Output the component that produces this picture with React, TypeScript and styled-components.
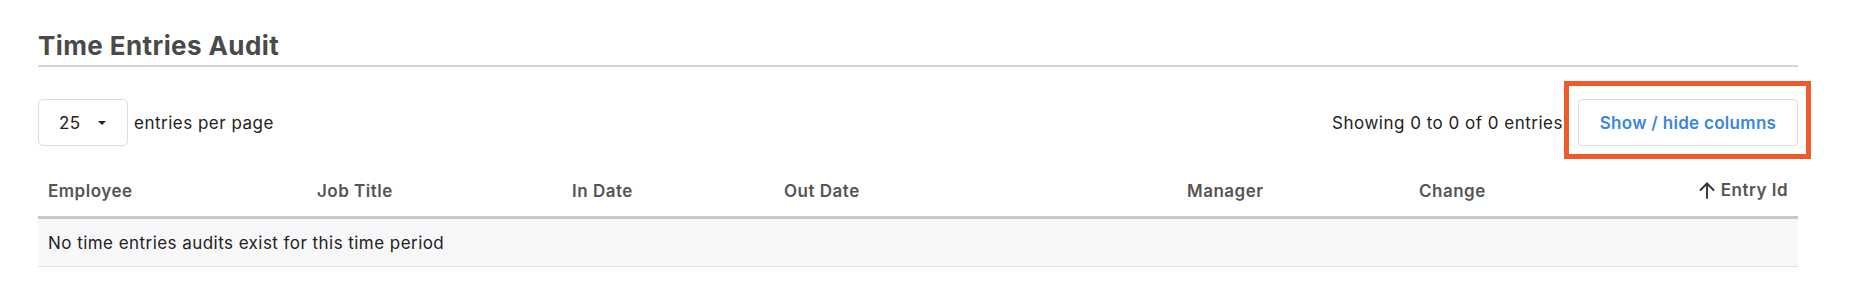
import styled, { createGlobalStyle } from 'styled-components';

const GlobalStyle = createGlobalStyle`
  body {
    margin: 0;
    background: #ffffff;
    font-family: Inter, "Noto Sans", sans-serif;
    color: #222222;
  }
`;

const Page = styled.div`
  padding: 30px 52px 0 38px;
`;

const Title = styled.h2`
  margin: 0;
  padding-bottom: 3px;
  font-size: 26px;
  line-height: 32px;
  font-weight: 700;
  letter-spacing: 0.4px;
  color: #4a4a4a;
  border-bottom: 2px solid #d4d4db;
`;

const Toolbar = styled.div`
  display: flex;
  align-items: center;
  justify-content: space-between;
  margin-top: 32px;
`;

const ToolbarGroup = styled.div<{ $gap: number }>`
  display: flex;
  align-items: center;
  column-gap: ${({ $gap }) => $gap}px;
`;

const Select = styled.div`
  display: flex;
  align-items: center;
  column-gap: 17px;
  box-sizing: border-box;
  width: 90px;
  height: 47px;
  padding-left: 20px;
  border: 1px solid #dcdce2;
  border-radius: 5px;
  font-size: 17px;
  letter-spacing: 0.5px;
`;

const Caret = styled.span`
  width: 0;
  height: 0;
  border-left: 4px solid transparent;
  border-right: 4px solid transparent;
  border-top: 4px solid #222222;
`;

const Label = styled.span`
  font-size: 17px;
  letter-spacing: 0.5px;
  color: #222222;
`;

const ColumnsButton = styled.button`
  position: relative;
  box-sizing: border-box;
  width: 220px;
  height: 47px;
  background: #ffffff;
  border: 1px solid #dcdde3;
  border-radius: 4px;
  font-family: inherit;
  font-size: 17px;
  font-weight: 600;
  letter-spacing: 0.3px;
  color: #3a86e0;
  cursor: pointer;

  &::after {
    content: '';
    position: absolute;
    top: -19px;
    bottom: -14px;
    left: -15px;
    right: -14px;
    border: 5px solid #ef5a2a;
    pointer-events: none;
  }
`;

const Table = styled.table`
  width: 100%;
  margin-top: 22px;
  border-collapse: collapse;
  table-layout: fixed;
`;

const HeadCell = styled.th<{ $align?: 'left' | 'right' }>`
  padding: 10px 10px 11px;
  text-align: ${({ $align }) => $align ?? 'left'};
  font-size: 17px;
  line-height: 24px;
  font-weight: 600;
  letter-spacing: 0.5px;
  color: #555555;
  border-bottom: 3px solid #c8c8cb;
`;

const SortLabel = styled.span`
  display: inline-flex;
  align-items: center;
  column-gap: 6px;

  svg {
    color: #333333;
  }
`;

const EmptyRow = styled.tr`
  background: #f8f8fa;
  border-bottom: 1px solid #e0e0e5;
`;

const EmptyCell = styled.td`
  padding: 12px 10px 11px;
  font-size: 17px;
  line-height: 24px;
  letter-spacing: 0.45px;
  color: #222222;
`;

const SortArrow = () => (
  <svg width='16' height='17' viewBox='0 0 16 17' fill='none' stroke='currentColor' strokeWidth='1.9' strokeLinecap='round' strokeLinejoin='round'>
    <path d='M8 16V1.5' />
    <path d='M1.5 8L8 1.5L14.5 8' />
  </svg>
);

const columns = [
  { title: 'Employee', width: 269 },
  { title: 'Job Title', width: 255 },
  { title: 'In Date', width: 212 },
  { title: 'Out Date', width: 403 },
  { title: 'Manager', width: 232 },
  { title: 'Change', width: 200 },
];

const App = () => {
  return (
    <>
      <GlobalStyle />
      <Page>
        <Title>Time Entries Audit</Title>
        <Toolbar>
          <ToolbarGroup $gap={6}>
            <Select>
              <span>25</span>
              <Caret />
            </Select>
            <Label>entries per page</Label>
          </ToolbarGroup>
          <ToolbarGroup $gap={15}>
            <Label>Showing 0 to 0 of 0 entries</Label>
            <ColumnsButton type='button'>Show / hide columns</ColumnsButton>
          </ToolbarGroup>
        </Toolbar>
        <Table>
          <colgroup>
            {columns.map((c) => <col key={c.title} style={{ width: c.width }} />)}
            <col />
          </colgroup>
          <thead>
            <tr>
              {columns.map((c) => <HeadCell key={c.title}>{c.title}</HeadCell>)}
              <HeadCell $align='right'>
                <SortLabel><SortArrow />Entry Id</SortLabel>
              </HeadCell>
            </tr>
          </thead>
          <tbody>
            <EmptyRow>
              <EmptyCell colSpan={7}>No time entries audits exist for this time period</EmptyCell>
            </EmptyRow>
          </tbody>
        </Table>
      </Page>
    </>
  );
};

export default App;
